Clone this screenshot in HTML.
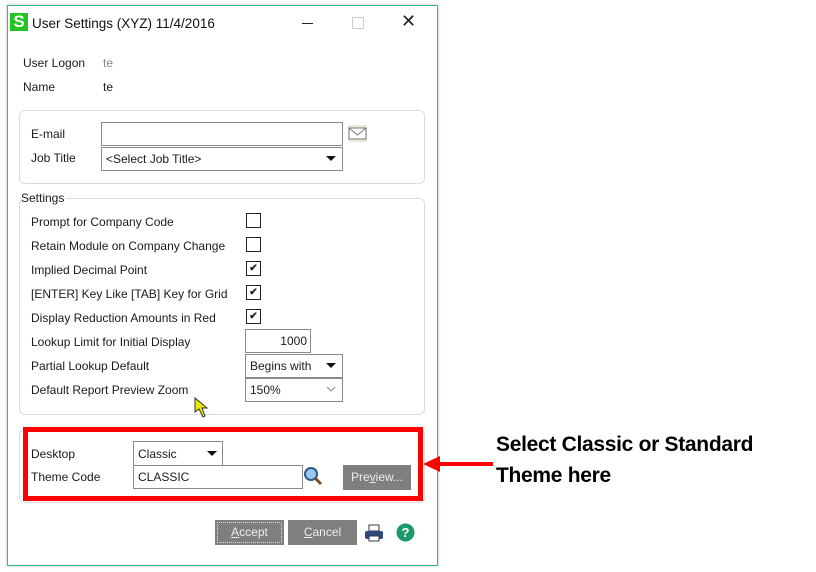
<!DOCTYPE html>
<html><head><meta charset="utf-8"><style>
body{margin:0;width:816px;height:572px;background:#fff;position:relative;overflow:hidden;font-family:"Liberation Sans",sans-serif;font-size:12px;color:#1a1a1a}
.a{position:absolute}
.dlg{left:7px;top:5px;width:429px;height:559px;border:1px solid #2fb89e;background:#fff;box-shadow:0 0 3px rgba(0,0,0,.25)}
.lbl{position:absolute;font-size:12px;line-height:14px}
.box{position:absolute;border:1px solid #d6dde3;border-radius:6px}
.inp{position:absolute;border:1px solid #8a8a8a;background:#fff;box-sizing:border-box;font-size:12px;line-height:22px;padding-left:4px}
.cb{position:absolute;width:15px;height:15px;border:1px solid #222;box-sizing:border-box;left:246px;font-size:10px;line-height:13px;text-align:center;font-weight:bold}
.dd{position:absolute;width:0;height:0;border-left:5px solid transparent;border-right:5px solid transparent;border-top:5px solid #111}
.btn{position:absolute;background:#7f7f7f;color:#eee;font-size:12px;text-align:center;line-height:24px}
</style></head><body>
<div class="a dlg"></div>
<div class="a" style="left:10px;top:13px;width:18px;height:18px;background:#22c422;color:#fff;font-weight:bold;font-size:17px;line-height:18px;text-align:center">S</div>
<div class="a" style="left:32px;top:16px;font-size:13.5px;color:#111">User Settings (XYZ) 11/4/2016</div>
<div class="a" style="left:302px;top:23px;width:11px;height:1px;background:#222"></div>
<div class="a" style="left:352px;top:17px;width:10px;height:10px;border:1px solid #ccc"></div>
<div class="a" style="left:401px;top:11px;font-size:18px;color:#222">✕</div>

<div class="lbl" style="left:23px;top:56px">User Logon</div>
<div class="lbl" style="left:103px;top:56px;color:#888">te</div>
<div class="lbl" style="left:23px;top:80px">Name</div>
<div class="lbl" style="left:103px;top:80px">te</div>

<div class="box" style="left:19px;top:110px;width:404px;height:72px"></div>
<div class="lbl" style="left:31px;top:127px">E-mail</div>
<div class="inp" style="left:101px;top:122px;width:242px;height:24px"></div>
<svg class="a" style="left:348px;top:125px" width="19" height="17"><rect width="19" height="17" fill="#ece8dc"/><rect x="1" y="3" width="17" height="11" fill="#fff" stroke="#777"/><path d="M1 3 L9.5 10 L18 3" fill="none" stroke="#777"/></svg>
<div class="lbl" style="left:31px;top:151px">Job Title</div>
<div class="inp" style="left:101px;top:147px;width:242px;height:24px">&lt;Select Job Title&gt;</div>
<div class="dd" style="left:326px;top:156px"></div>

<div class="box" style="left:19px;top:198px;width:404px;height:215px"></div>
<div class="lbl" style="left:21px;top:191px;background:#fff;padding-right:2px">Settings</div>
<div class="lbl" style="left:31px;top:215px">Prompt for Company Code</div>
<div class="lbl" style="left:31px;top:239px">Retain Module on Company Change</div>
<div class="lbl" style="left:31px;top:263px">Implied Decimal Point</div>
<div class="lbl" style="left:31px;top:287px">[ENTER] Key Like [TAB] Key for Grid</div>
<div class="lbl" style="left:31px;top:311px">Display Reduction Amounts in Red</div>
<div class="lbl" style="left:31px;top:335px">Lookup Limit for Initial Display</div>
<div class="lbl" style="left:31px;top:359px">Partial Lookup Default</div>
<div class="lbl" style="left:31px;top:383px">Default Report Preview Zoom</div>
<div class="cb" style="top:213px"></div>
<div class="cb" style="top:237px"></div>
<div class="cb" style="top:261px">✔</div>
<div class="cb" style="top:285px">✔</div>
<div class="cb" style="top:309px">✔</div>
<div class="inp" style="left:245px;top:329px;width:66px;height:24px;text-align:right;padding-right:3px">1000</div>
<div class="inp" style="left:245px;top:354px;width:98px;height:24px">Begins with</div>
<div class="dd" style="left:326px;top:363px"></div>
<div class="inp" style="left:245px;top:378px;width:98px;height:24px">150%</div>
<svg class="a" style="left:326px;top:386px" width="10" height="6"><path d="M1 1 L5 5 L9 1" fill="none" stroke="#888"/></svg>
<svg class="a" style="left:193px;top:396px" width="16" height="24"><path d="M2 2 L2 16 L6 13 L10 21 L12 20 L9 12 L14 12 Z" fill="#e8e800" stroke="#333"/></svg>

<div class="box" style="left:19px;top:429px;width:404px;height:72px"></div>
<div class="a" style="left:23px;top:427px;width:390px;height:64px;border:5px solid #f00"></div>
<div class="lbl" style="left:31px;top:447px">Desktop</div>
<div class="inp" style="left:133px;top:441px;width:90px;height:25px;line-height:25px">Classic</div>
<div class="dd" style="left:207px;top:451px"></div>
<div class="lbl" style="left:31px;top:470px">Theme Code</div>
<div class="inp" style="left:133px;top:465px;width:170px;height:24px">CLASSIC</div>
<svg class="a" style="left:303px;top:466px" width="20" height="20"><circle cx="8" cy="8" r="6" fill="#9cc8ee" stroke="#2a5a8a" stroke-width="2"/><path d="M12 12 L18 18" stroke="#7a4a2a" stroke-width="3"/></svg>
<div class="btn" style="left:343px;top:465px;width:68px;height:25px;line-height:25px">Pre<u>v</u>iew...</div>

<div class="btn" style="left:215px;top:520px;width:69px;height:25px;line-height:25px;outline:1px dotted #ddd;outline-offset:-3px"><u>A</u>ccept</div>
<div class="btn" style="left:288px;top:520px;width:69px;height:25px;line-height:25px"><u>C</u>ancel</div>
<svg class="a" style="left:364px;top:523px" width="20" height="20"><rect x="5" y="2" width="10" height="6" fill="#fff" stroke="#335"/><rect x="1" y="8" width="18" height="8" rx="2" fill="#2c4a7a"/><rect x="5" y="13" width="10" height="5" fill="#fff" stroke="#335"/></svg>
<svg class="a" style="left:396px;top:523px" width="19" height="19"><circle cx="9.5" cy="9.5" r="9" fill="#1a9a6a"/><text x="9.5" y="14" font-family="Liberation Sans" font-weight="bold" font-size="13" fill="#fff" text-anchor="middle">?</text></svg>

<svg class="a" style="left:420px;top:452px" width="80" height="24"><path d="M3 12 L20 4 L20 20 Z" fill="#f00"/><rect x="18" y="10" width="55" height="4" fill="#f00"/></svg>
<div class="a" style="left:496px;top:429px;font-size:21px;font-weight:bold;line-height:31px;color:#000;letter-spacing:-0.3px">Select Classic or Standard<br>Theme here</div>
</body></html>
